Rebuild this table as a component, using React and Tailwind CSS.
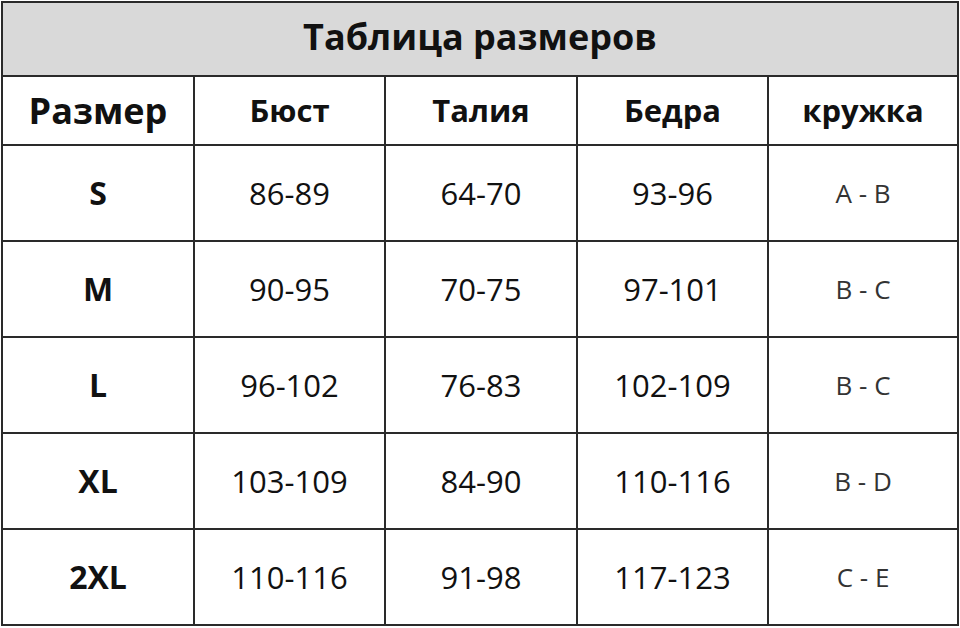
import React from 'react';

const rows = [
  ['S', '86-89', '64-70', '93-96', 'A - B'],
  ['M', '90-95', '70-75', '97-101', 'B - C'],
  ['L', '96-102', '76-83', '102-109', 'B - C'],
  ['XL', '103-109', '84-90', '110-116', 'B - D'],
  ['2XL', '110-116', '91-98', '117-123', 'C - E'],
];

const heads = ['Бюст', 'Талия', 'Бедра', 'кружка'];

export default function App() {
  return (
    <div className="w-[960px] h-[628px] bg-white pt-px pl-px" style={{ fontFamily: '"Open Sans", "Noto Sans", sans-serif' }}>
      <div className="w-[958px] border-l-2 border-t-2 border-[#2a2a2a] grid grid-cols-[192px_191px_192px_191px_190px] text-[#111]">
        {/* title */}
        <div className="col-span-5 h-[74px] bg-[#d9d9d9] border-r-2 border-b-2 border-[#2a2a2a] flex items-center justify-center">
          <span className="text-[36px] font-bold pb-1 leading-none">Таблица размеров</span>
        </div>

        {/* column headers */}
        <div className="h-[69px] border-r-2 border-b-2 border-[#2a2a2a] flex items-center justify-center">
          <span className="text-[36px] font-bold leading-none">Размер</span>
        </div>
        {heads.map(h => (
          <div key={h} className="h-[69px] border-r-2 border-b-2 border-[#2a2a2a] flex items-center justify-center">
            <span className="text-[31px] font-bold leading-none">{h}</span>
          </div>
        ))}

        {/* body */}
        {rows.map(r => (
          <React.Fragment key={r[0]}>
            <div className="h-[96px] border-r-2 border-b-2 border-[#2a2a2a] flex items-center justify-center">
              <span className="text-[32px] font-bold leading-none">{r[0]}</span>
            </div>
            {r.slice(1, 4).map((v, i) => (
              <div key={i} className="h-[96px] border-r-2 border-b-2 border-[#2a2a2a] flex items-center justify-center">
                <span className="text-[31px] leading-none">{v}</span>
              </div>
            ))}
            <div className="h-[96px] border-r-2 border-b-2 border-[#2a2a2a] flex items-center justify-center">
              <span className="text-[26px] text-[#333] leading-none">{r[4]}</span>
            </div>
          </React.Fragment>
        ))}
      </div>
    </div>
  );
}
